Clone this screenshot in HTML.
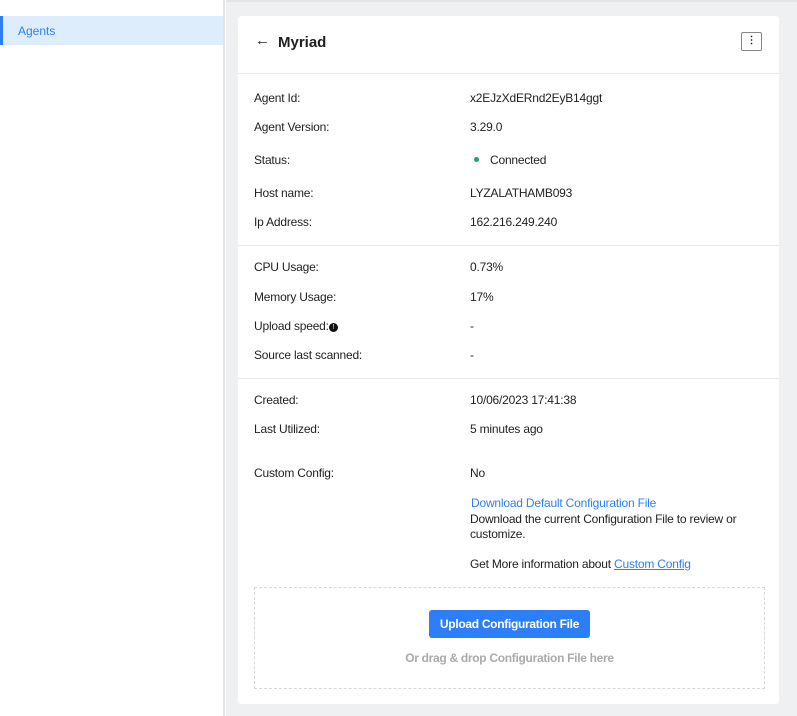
<!DOCTYPE html>
<html><head><style>
*{box-sizing:border-box;margin:0;padding:0}
body{width:797px;height:716px;overflow:hidden;font-family:"Liberation Sans",sans-serif;font-size:12px;color:#1f1f1f;background:#fff;position:relative}
.side{position:absolute;left:0;top:0;width:225px;height:716px;background:#fff;border-right:2px solid #e3e4e7}
.side .act{position:absolute;left:0;top:16px;width:223px;height:29px;background:#deedfc;border-left:3px solid #2d7ff9;color:#2d7ff9;padding:8px 0 0 15px;font-size:12px}
.main{position:absolute;left:226px;top:0;width:571px;height:716px;background:#eff0f2;border-top:2px solid #e3e4e7}
.card{position:absolute;left:12px;top:14px;width:541px;height:688px;background:#fff;border-radius:3px}
.hdr{height:58px;border-bottom:1px solid #e8e8e8;position:relative}
.hdr .t{position:absolute;left:40px;top:18px;font-size:15px;font-weight:bold}
.hdr .ar{position:absolute;left:17px;top:16px;font-size:15px}
.hdr .m{position:absolute;left:503px;top:16px;width:21px;height:19px;border:1px solid #888;border-radius:2px;text-align:center;font-size:10px;line-height:16px;font-weight:bold}
.r{position:absolute;left:16px;width:520px;letter-spacing:-0.2px}
.r .l{position:absolute;left:0}
.r .v{position:absolute;left:216px}
.sep{position:absolute;left:0;width:541px;height:1px;background:#e8e8e8}
a{color:#2d7ff9;text-decoration:none}
.drop{position:absolute;left:16px;top:571px;width:511px;height:102px;border:1px dashed #d8d8d8}
.btn{position:absolute;left:174px;top:22px;width:161px;height:28px;background:#2d7ff9;border-radius:3px;color:#fff;font-weight:bold;text-align:center;line-height:28px;letter-spacing:-0.3px}
.dd{position:absolute;left:0;width:100%;top:63px;text-align:center;color:#aaa;font-weight:bold;letter-spacing:-0.3px}
</style></head><body>
<div class="side"><div class="act">Agents</div></div>
<div class="main"><div class="card">
<div class="hdr"><span class="ar">←</span><span class="t">Myriad</span><div class="m">⋮</div></div>
<div class="r" style="top:75px"><span class="l">Agent Id:</span><span class="v">x2EJzXdERnd2EyB14ggt</span></div>
<div class="r" style="top:104px"><span class="l">Agent Version:</span><span class="v">3.29.0</span></div>
<div class="r" style="top:137px"><span class="l">Status:</span><span class="v" style="left:220px"><span style="display:inline-block;width:5px;height:5px;border-radius:50%;background:#1f9e6e;vertical-align:2px;margin-right:11px"></span>Connected</span></div>
<div class="r" style="top:170px"><span class="l">Host name:</span><span class="v">LYZALATHAMB093</span></div>
<div class="r" style="top:199px"><span class="l">Ip Address:</span><span class="v">162.216.249.240</span></div>
<div class="sep" style="top:229px"></div>
<div class="r" style="top:244px"><span class="l">CPU Usage:</span><span class="v">0.73%</span></div>
<div class="r" style="top:274px"><span class="l">Memory Usage:</span><span class="v">17%</span></div>
<div class="r" style="top:303px"><span class="l">Upload speed:<span style="display:inline-block;width:9px;height:9px;border-radius:50%;background:#111;color:#fff;font-size:7px;text-align:center;line-height:9px;vertical-align:1px">!</span></span><span class="v">-</span></div>
<div class="r" style="top:332px"><span class="l">Source last scanned:</span><span class="v">-</span></div>
<div class="sep" style="top:362px"></div>
<div class="r" style="top:377px"><span class="l">Created:</span><span class="v">10/06/2023 17:41:38</span></div>
<div class="r" style="top:406px"><span class="l">Last Utilized:</span><span class="v">5 minutes ago</span></div>
<div class="r" style="top:450px"><span class="l">Custom Config:</span><span class="v">No</span></div>
<div class="r" style="top:480px"><span class="v" style="left:217px"><a>Download Default Configuration File</a></span></div>
<div class="r" style="top:496px"><span class="v" style="width:290px;line-height:15px">Download the current Configuration File to review or customize.</span></div>
<div class="r" style="top:541px"><span class="v">Get More information about <a style="text-decoration:underline">Custom Config</a></span></div>
<div class="drop"><div class="btn">Upload Configuration File</div><div class="dd">Or drag &amp; drop Configuration File here</div></div>
</div></div>
</body></html>
